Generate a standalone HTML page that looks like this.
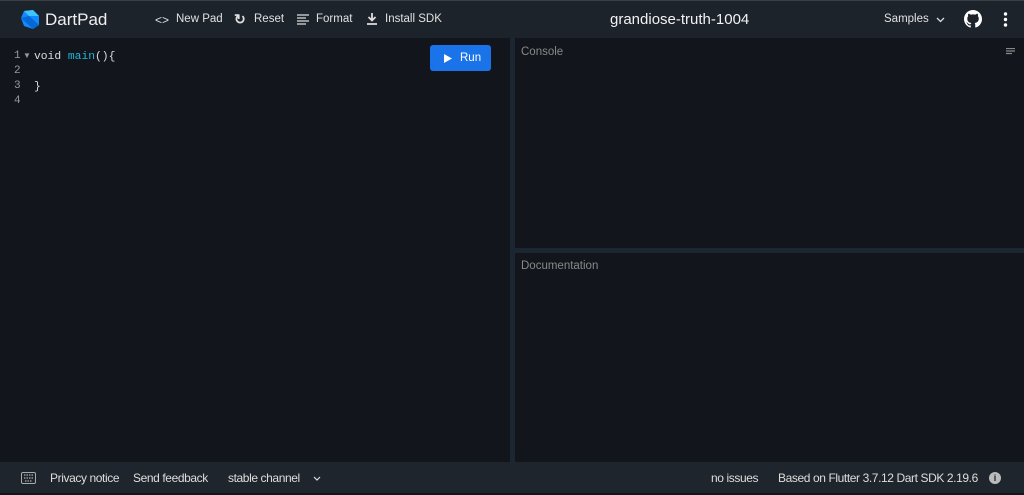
<!DOCTYPE html>
<html><head><style>
*{margin:0;padding:0;box-sizing:border-box}
body{width:1024px;height:495px;background:#12161c;font-family:"Liberation Sans",sans-serif;color:#e6e6e6;position:relative;overflow:hidden}
.hdr{position:absolute;left:0;top:0;width:1024px;height:38px;background:#1c232b;border-top:1px solid #3a3f45}
.t{position:absolute;font-size:11.5px;color:#e0e0e0;white-space:nowrap}
.code{position:absolute;font-family:"Liberation Mono",monospace;font-size:11.3px;color:#ddd}
.ln{position:absolute;left:14px;font-family:"Liberation Mono",monospace;font-size:11px;color:#999}
.ftr{position:absolute;left:0;top:462px;width:1024px;height:31px;background:#1f252c}
.f{position:absolute;top:471px;font-size:12px;color:#ddd;white-space:nowrap;letter-spacing:-0.4px}
</style></head><body>
<div class="hdr"></div>
<svg style="position:absolute;left:20px;top:9px" width="20" height="21" viewBox="0 0 20 21"><path d="M4 2 L13 1 L19 7 L19 16 L13 20 L4 17 L1 9 Z" fill="#1389fd"/><path d="M4 2 L13 1 L19 7 L9 7 Z" fill="#40c4ff"/><path d="M1 9 L9 7 L19 16 L13 20 Z" fill="#0468d7"/></svg>
<div class="t" style="left:45px;top:10px;font-size:17px;color:#f0f0f0">DartPad</div>
<div class="t" style="left:155px;top:13px;font-size:12px">&lt;&gt;</div>
<div class="t" style="left:176px;top:13px">New Pad</div>
<div class="t" style="left:234px;top:11px;font-size:14px;font-weight:bold">↻</div>
<div class="t" style="left:254px;top:13px">Reset</div>
<svg style="position:absolute;left:297px;top:14px" width="12" height="11"><path d="M0 1h12M0 4h9M0 7h12M0 10h9" stroke="#ddd" stroke-width="1.3"/></svg>
<div class="t" style="left:316px;top:13px">Format</div>
<svg style="position:absolute;left:367px;top:13px" width="10" height="12"><path d="M5 0v7M1.5 4l3.5 3.5L8.5 4M0 11h10" stroke="#ddd" stroke-width="1.8" fill="none"/></svg>
<div class="t" style="left:385px;top:13px">Install SDK</div>
<div class="t" style="left:610px;top:11px;font-size:15px;color:#f2f2f2">grandiose-truth-1004</div>
<div class="t" style="left:884px;top:13px">Samples</div>
<svg style="position:absolute;left:936px;top:17px" width="9" height="6"><path d="M1 1l3.5 3.5L8 1" stroke="#ddd" stroke-width="1.3" fill="none"/></svg>
<svg style="position:absolute;left:964px;top:10px" width="18" height="18" viewBox="0 0 16 16"><path fill="#fff" d="M8 0C3.58 0 0 3.58 0 8c0 3.54 2.29 6.53 5.47 7.59.4.07.55-.17.55-.38 0-.19-.01-.82-.01-1.490-2.01.37-2.53-.49-2.69-.94-.09-.23-.48-.94-.82-1.13-.28-.15-.68-.52-.01-.53.63-.01 1.08.58 1.23.82.72 1.21 1.87.87 2.330.66.07-.52.28-.87.51-1.07-1.78-.2-3.64-.89-3.64-3.95 0-.87.31-1.59.82-2.15-.08-.2-.36-1.02.08-2.12 0 0 .67-.21 2.2.82.64-.18 1.32-.27 2-.27.68 0 1.36.09 2 .27 1.53-1.04 2.2-.82 2.2-.82.44 1.1.16 1.92.08 2.12.51.56.82 1.27.82 2.15 0 3.07-1.87 3.75-3.65 3.95.29.25.54.73.54 1.48 0 1.07-.01 1.93-.01 2.2 0 .21.15.46.55.38A8.013 8.013 0 0016 8c0-4.42-3.58-8-8-8z"/></svg>
<svg style="position:absolute;left:1003px;top:12px" width="5" height="15"><circle cx="2.5" cy="2" r="1.7" fill="#fff"/><circle cx="2.5" cy="7.5" r="1.7" fill="#fff"/><circle cx="2.5" cy="13" r="1.7" fill="#fff"/></svg>
<div class="ln" style="top:50px">1</div><div class="ln" style="top:65px">2</div><div class="ln" style="top:80px">3</div><div class="ln" style="top:95px">4</div>
<div class="t" style="left:23px;top:51px;font-size:8px;color:#999">▼</div>
<div class="code" style="left:34px;top:51px">void <span style="color:#1fb5d8">main</span>(){</div>
<div class="code" style="left:34px;top:81px">}</div>
<div style="position:absolute;left:430px;top:45px;width:61px;height:26px;background:#1a73e8;border-radius:3px"></div>
<svg style="position:absolute;left:444px;top:54px" width="8" height="9"><path d="M0 0L8 4.5L0 9Z" fill="#fff"/></svg>
<div class="t" style="left:460px;top:52px;color:#fff">Run</div>
<div style="position:absolute;left:510px;top:38px;width:5px;height:424px;background:#1c2630"></div>
<div style="position:absolute;left:515px;top:248px;width:509px;height:5px;background:#1c2630"></div>
<div class="t" style="left:521px;top:46px;color:#888">Console</div>
<svg style="position:absolute;left:1006px;top:48px" width="9" height="7"><path d="M0 .5h9M0 3h9M0 5.5h6" stroke="#888" stroke-width="1.2"/></svg>
<div class="t" style="left:521px;top:260px;color:#888">Documentation</div>
<div class="ftr"></div>
<svg style="position:absolute;left:21px;top:472px" width="15" height="12"><rect x="0.5" y="0.5" width="14" height="11" rx="1.5" fill="none" stroke="#aaa"/><path d="M3 3h9M3 6h9M4 9h7" stroke="#aaa" stroke-width="1.3" stroke-dasharray="1.5 1"/></svg>
<div class="f" style="left:50px">Privacy notice</div>
<div class="f" style="left:133px">Send feedback</div>
<div class="f" style="left:228px">stable channel</div>
<svg style="position:absolute;left:313px;top:476px" width="8" height="5"><path d="M1 1l3 3 3-3" stroke="#ddd" stroke-width="1.2" fill="none"/></svg>
<div class="f" style="left:711px">no issues</div>
<div class="f" style="left:778px">Based on Flutter 3.7.12 Dart SDK 2.19.6</div>
<div style="position:absolute;left:989px;top:472px;width:12px;height:12px;border-radius:50%;background:#bbb;color:#1f252c;font-size:9px;font-weight:bold;text-align:center;line-height:12px">i</div>
</body></html>
